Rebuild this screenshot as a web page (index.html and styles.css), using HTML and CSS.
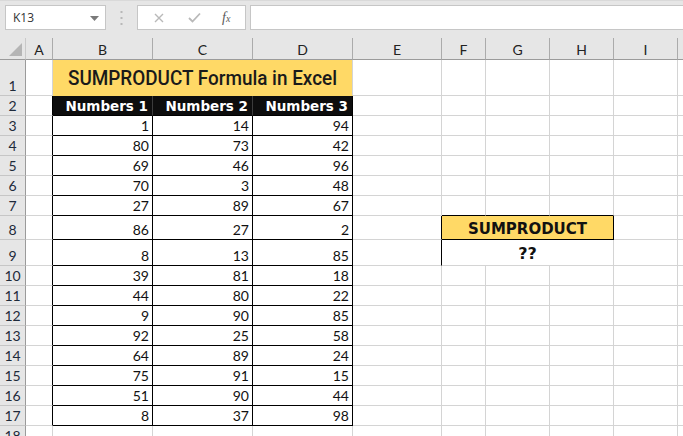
FILE: index.html
```html
<!DOCTYPE html>
<html>
<head>
<meta charset="utf-8">
<link rel="stylesheet" href="styles.css">
</head>
<body>
<div class="formula-bar">
  <div class="name-box">
    <span class="name-text">K13</span>
    <svg class="caret" width="9" height="5" viewBox="0 0 9 5"><path d="M0 0H9L4.5 5Z" fill="#7a7a7a"/></svg>
  </div>
  <div class="grip">
    <svg width="3" height="14" viewBox="0 0 3 14"><rect x="0.5" y="0" width="2" height="2" fill="#b8b8b8"/><rect x="0.5" y="6" width="2" height="2" fill="#b8b8b8"/><rect x="0.5" y="12" width="2" height="2" fill="#b8b8b8"/></svg>
  </div>
  <div class="fx-box">
    <svg class="ico" width="12" height="12" viewBox="0 0 12 12"><path d="M2 2L10 10M10 2L2 10" stroke="#b9b9b9" stroke-width="1.4" fill="none"/></svg>
    <svg class="ico" width="13" height="11" viewBox="0 0 13 11"><path d="M1 6L4.5 9.5L12 1.5" stroke="#b9b9b9" stroke-width="1.8" fill="none"/></svg>
    <span class="fx">f<span class="fx-x">x</span></span>
  </div>
  <div class="formula-input"></div>
</div>
<table class="sheet">
  <colgroup>
    <col class="w-rh"><col class="w-a"><col class="w-b"><col class="w-b"><col class="w-b"><col class="w-e"><col class="w-f"><col class="w-g"><col class="w-g"><col class="w-g"><col class="w-j">
  </colgroup>
  <thead>
    <tr class="col-head">
      <th class="corner"><svg class="corner-tri" width="13" height="13" viewBox="0 0 13 13"><path d="M13 0V13H0Z" fill="#b5b5b5"/></svg></th>
      <th>A</th><th>B</th><th>C</th><th>D</th><th>E</th><th>F</th><th>G</th><th>H</th><th>I</th><th></th>
    </tr>
  </thead>
  <tbody>
    <tr class="r-title"><th class="rh">1</th><td></td><td class="title" colspan="3"><span class="title-text">SUMPRODUCT Formula in Excel</span></td><td></td><td></td><td></td><td></td><td></td><td></td></tr>
    <tr><th class="rh">2</th><td class="edge"></td><td class="hd">Numbers 1</td><td class="hd">Numbers 2</td><td class="hd hd-last">Numbers 3</td><td></td><td></td><td></td><td></td><td></td><td></td></tr>
    <tr><th class="rh">3</th><td class="edge"></td><td class="n">1</td><td class="n">14</td><td class="n">94</td><td></td><td></td><td></td><td></td><td></td><td></td></tr>
    <tr><th class="rh">4</th><td class="edge"></td><td class="n">80</td><td class="n">73</td><td class="n">42</td><td></td><td></td><td></td><td></td><td></td><td></td></tr>
    <tr><th class="rh">5</th><td class="edge"></td><td class="n">69</td><td class="n">46</td><td class="n">96</td><td></td><td></td><td></td><td></td><td></td><td></td></tr>
    <tr><th class="rh">6</th><td class="edge"></td><td class="n">70</td><td class="n">3</td><td class="n">48</td><td></td><td></td><td></td><td></td><td></td><td></td></tr>
    <tr><th class="rh">7</th><td class="edge"></td><td class="n">27</td><td class="n">89</td><td class="n">67</td><td></td><td class="above"></td><td class="above"></td><td class="above"></td><td></td><td></td></tr>
    <tr class="r8"><th class="rh">8</th><td class="edge"></td><td class="n">86</td><td class="n">27</td><td class="n">2</td><td class="edge"></td><td class="sp-head" colspan="3">SUMPRODUCT</td><td></td><td></td></tr>
    <tr class="r9"><th class="rh">9</th><td class="edge"></td><td class="n">8</td><td class="n">13</td><td class="n">85</td><td class="edge"></td><td class="sp-val" colspan="3">??</td><td></td><td></td></tr>
    <tr><th class="rh">10</th><td class="edge"></td><td class="n">39</td><td class="n">81</td><td class="n">18</td><td></td><td></td><td></td><td></td><td></td><td></td></tr>
    <tr><th class="rh">11</th><td class="edge"></td><td class="n">44</td><td class="n">80</td><td class="n">22</td><td></td><td></td><td></td><td></td><td></td><td></td></tr>
    <tr><th class="rh">12</th><td class="edge"></td><td class="n">9</td><td class="n">90</td><td class="n">85</td><td></td><td></td><td></td><td></td><td></td><td></td></tr>
    <tr><th class="rh">13</th><td class="edge"></td><td class="n">92</td><td class="n">25</td><td class="n">58</td><td></td><td></td><td></td><td></td><td></td><td></td></tr>
    <tr><th class="rh">14</th><td class="edge"></td><td class="n">64</td><td class="n">89</td><td class="n">24</td><td></td><td></td><td></td><td></td><td></td><td></td></tr>
    <tr><th class="rh">15</th><td class="edge"></td><td class="n">75</td><td class="n">91</td><td class="n">15</td><td></td><td></td><td></td><td></td><td></td><td></td></tr>
    <tr><th class="rh">16</th><td class="edge"></td><td class="n">51</td><td class="n">90</td><td class="n">44</td><td></td><td></td><td></td><td></td><td></td><td></td></tr>
    <tr><th class="rh">17</th><td class="edge"></td><td class="n">8</td><td class="n">37</td><td class="n">98</td><td></td><td></td><td></td><td></td><td></td><td></td></tr>
    <tr><th class="rh">18</th><td></td><td></td><td></td><td></td><td></td><td></td><td></td><td></td><td></td><td></td></tr>
  </tbody>
</table>
</body>
</html>
```
FILE: styles.css
```css
html, body {
  margin: 0;
  padding: 0;
  background: #ffffff;
  overflow: hidden;
  width: 683px;
  height: 436px;
}
body {
  font-family: "Lato", "Open Sans", sans-serif;
  color: #000;
}
.formula-bar {
  height: 38px;
  box-sizing: border-box;
  background: #e6e6e6;
  display: flex;
  align-items: flex-start;
  padding: 4px 0 0 5px;
  border-top: 1px solid #d9d9d9;
}
.name-box {
  width: 101px;
  height: 25px;
  box-sizing: border-box;
  background: #fff;
  border: 1px solid #c6c6c6;
  display: flex;
  align-items: center;
  justify-content: space-between;
  padding: 0 6px 0 7px;
}
.name-text {
  font-family: "Open Sans", "Liberation Sans", sans-serif;
  font-size: 12px;
  color: #333;
}
.caret { margin-top: 1px; }
.grip {
  width: 31px;
  height: 25px;
  display: flex;
  align-items: center;
  justify-content: center;
}
.fx-box {
  width: 109px;
  height: 25px;
  box-sizing: border-box;
  background: #fff;
  border: 1px solid #c6c6c6;
  display: flex;
  align-items: center;
  padding-left: 15px;
  gap: 23px;
}
.fx {
  font-family: "Liberation Serif", serif;
  font-style: italic;
  font-size: 14px;
  color: #5a5a5a;
  margin-left: -2px;
}
.fx-x { font-size: 10px; }
.formula-input {
  flex: 1;
  margin-left: 4px;
  height: 25px;
  box-sizing: border-box;
  background: #fff;
  border: 1px solid #c6c6c6;
  border-right: none;
}
.sheet {
  table-layout: fixed;
  border-collapse: separate;
  border-spacing: 0;
  width: 738px;
}
.w-rh { width: 26px; }
.w-a { width: 27px; }
.w-b { width: 100px; }
.w-e { width: 89px; }
.w-f { width: 44px; }
.w-g { width: 64px; }
.w-j { width: 60px; }
.sheet th, .sheet td {
  padding: 0;
  box-sizing: border-box;
}
.col-head { height: 22px; }
.col-head th {
  background: #e6e6e6;
  font-family: "Lato", sans-serif;
  font-weight: normal;
  font-size: 14px;
  color: #222;
  border-right: 1px solid #ababab;
  border-bottom: 1px solid #9b9b9b;
  text-align: center;
  vertical-align: middle;
  line-height: 14px;
  padding-top: 2px;
}
.col-head th.corner {
  position: relative;
  border-right: 1px solid #c9c9c9;
}
.corner-tri {
  position: absolute;
  right: 3px;
  bottom: 3px;
}
tbody tr { height: 20px; }
tbody tr.r-title { height: 36px; }
tbody tr.r8 { height: 24px; }
tbody tr.r9 { height: 26px; }
.rh {
  background: #e6e6e6;
  font-family: "Lato", sans-serif;
  font-weight: normal;
  font-size: 14px;
  color: #1e2a3a;
  text-align: center;
  vertical-align: bottom;
  line-height: 14px;
  padding-bottom: 2px !important;
  border-right: 1px solid #9b9b9b;
  border-bottom: 1px solid #c6c6c6;
}
.sheet td {
  border-right: 1px solid #d4d4d4;
  border-bottom: 1px solid #d4d4d4;
  font-size: 14px;
  line-height: 14px;
  vertical-align: bottom;
  white-space: nowrap;
  overflow: hidden;
}
.sheet td.edge { border-right-color: #000; }
.sheet td.title {
  background: #ffd966;
  border-right-color: #d4d4d4;
  border-bottom-color: #ffd966;
  text-align: center;
  vertical-align: middle;
  line-height: 22px;
  padding-top: 2px;
}
.title-text {
  display: inline-block;
  font-family: "Roboto", sans-serif;
  font-weight: 500;
  font-size: 21px;
  color: #1a1a1a;
  transform: scaleX(0.9);
}
.sheet td.hd {
  background: #0d0d0d;
  color: #fff;
  border-right-color: #3c3c3c;
  border-bottom-color: #000;
  font-family: "DejaVu Sans", sans-serif;
  font-weight: bold;
  font-size: 13.5px;
  text-align: right;
  padding-right: 4px;
  padding-bottom: 2px;
}
.sheet td.hd-last { border-right-color: #000; }
.sheet td.n {
  border-right-color: #000;
  border-bottom-color: #000;
  text-align: right;
  padding-right: 3px;
  padding-bottom: 2px;
  color: #111;
}
.sheet td.above { border-bottom-color: #000; }
.sheet td.sp-head {
  background: #ffd966;
  border-right-color: #000;
  border-bottom-color: #000;
  font-family: "DejaVu Sans", sans-serif;
  font-weight: bold;
  font-size: 15px;
  text-align: center;
  padding-bottom: 3px;
  color: #111;
}
.sheet td.sp-val {
  font-family: "DejaVu Sans", sans-serif;
  font-weight: bold;
  font-size: 16px;
  text-align: center;
  padding-bottom: 4px;
  color: #111;
}
```
